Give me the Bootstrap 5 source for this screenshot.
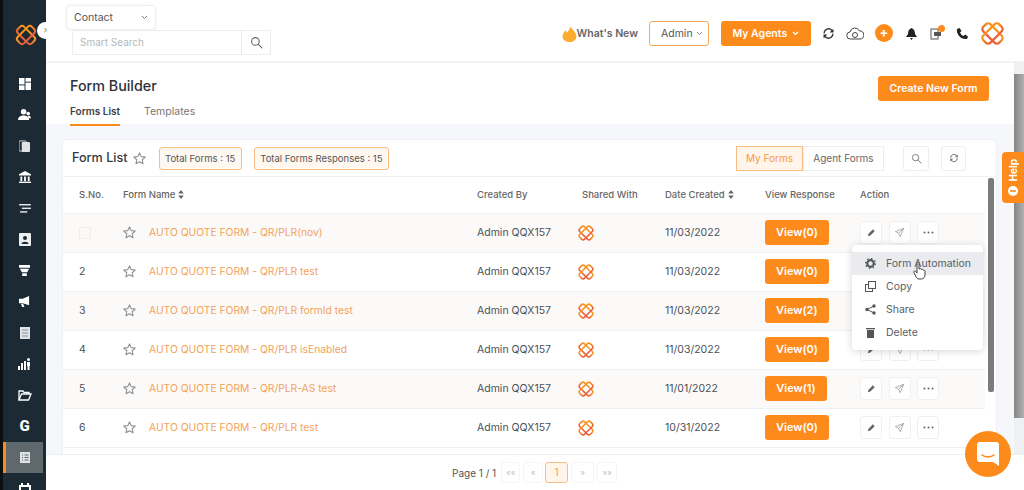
<!DOCTYPE html>
<html lang="en">
<head>
<meta charset="UTF-8">
<title>Form Builder</title>
<link href="https://cdn.jsdelivr.net/npm/bootstrap@5.3.3/dist/css/bootstrap.min.css" rel="stylesheet">
<style>
  html, body { height: 100%; overflow: hidden; }
  body { font-family: "Inter", "Open Sans", sans-serif; font-size: 11px; color: #4a5058; background: #fff; }
  .app-wrap { height: 490px; width: 1024px; }
  .side-bar { width: 46px; flex: none; background: #1c2b33; border-left: 3px solid #0a0f12; position: relative; padding-top: 23px; }
  .side-logo { height: 26px; margin-bottom: 19px; padding-left: 11px; }
  .side-toggle { position: absolute; left: 34px; top: 22px; width: 17px; height: 17px; border-radius: 50%; background: #fff; color: #777; font-size: 9px; line-height: 16px; text-align: center; z-index: 5; }
  .side-item { height: 31.2px; display: flex; align-items: center; justify-content: center; color: #fff; }
  .side-item.active { background: #5f686d; border-left: 3px solid #fd8b1c; margin-right: 3px; }
  .side-g { font-family: "Roboto", sans-serif; font-weight: 900; font-size: 15px; }
  .top-head { height: 63px; border-bottom: 2px solid #f2f3f5; padding: 5px 18px 0 20px; }
  .contact-sel { width: 90px; height: 25px; border: 1px solid #eee; border-radius: 4px; padding: 0 7px; color: #555; font-size: 10.5px; box-shadow: 0 0 3px rgba(0,0,0,.06); }
  .smart-box { margin-left: 6px; width: 199px; height: 25px; border: 1px solid #eee; }
  .smart-input { flex: 1; color: #b5b8bc; font-size: 10px; padding-left: 7px; line-height: 22px; border-right: 1px solid #e8e8e8; }
  .smart-btn { width: 28px; display: flex; align-items: center; justify-content: center; color: #666; }
  .whats-new { font-weight: 600; font-size: 10.5px; color: #666; margin-right: 11px; margin-top: 5px; }
  .admin-sel { width: 60px; height: 25px; border: 1px solid #f4a860; border-radius: 3px; color: #555; font-size: 10.5px; padding: 0 5px 0 11px; margin-right: 12px; }
  .btn-orange { background: #fd8b1c; color: #fff; border: 0; border-radius: 3px; font-weight: 600; font-size: 10.5px; padding: 0; }
  .agents-btn { width: 90px; height: 25px; margin-right: 11px; }
  .plus-dot { width: 18px; height: 18px; background: #fd8b1c; border-radius: 50%; color: #fff; text-align: center; font-weight: 700; font-size: 13px; line-height: 17px; margin-right: 13px; margin-top: 3px; }
  .note-dot { position: absolute; width: 7px; height: 7px; border-radius: 50%; background: #fd8b1c; right: -3px; top: -3px; }
  .note-wrap { margin-right: 14px; margin-top: 7px; height: 12px; }
  .page-title { height: 61px; padding: 14px 35px 0 24px; }
  .page-title h1 { font-size: 14.3px; font-weight: 500; color: #2c3238; margin: 0 0 9px; }
  .tab-link { display: inline-block; font-size: 10px; padding-bottom: 5px; color: #777; margin-right: 24px; }
  .tab-link.active { color: #3d4349; font-weight: 600; border-bottom: 2px solid #fd8b1c; }
  .tab-link.plain { font-size: 10.5px; }
  .create-btn { width: 111px; height: 25px; margin-top: -1px; }
  .page-body { background: #f5f7fa; padding: 15px 27px 0 16px; height: 330px; overflow: hidden; }
  .list-box { background: #fff; border: 1px solid #eff1f3; border-radius: 5px 5px 0 0; height: 330px; position: relative; }
  .list-head { height: 37px; padding: 0 30px 0 9px; border-bottom: 1px solid #f0f1f3; }
  .list-head h2 { font-size: 12.6px; font-weight: 500; color: #33393f; margin: 0 4px 0 0; }
  .count-tag { border: 1px solid #f7bd85; background: #fff8f1; border-radius: 3px; height: 23px; line-height: 21px; padding: 0 5.5px; font-size: 9.5px; color: #555; margin-left: 12px; white-space: nowrap; }
  .seg-btn { height: 25px; line-height: 23px; border: 1px solid #eee; font-size: 10px; color: #666; text-align: center; }
  .seg-btn.active { border-color: #f7bd85; background: #fff5ea; color: #f59a45; width: 67px; }
  .seg-btn.agent { width: 81px; }
  .tool-btn { width: 25px; height: 25px; border: 1px solid #eee; border-radius: 3px; display: flex; align-items: center; justify-content: center; color: #777; margin-left: 12px; }
  .tool-btn.wide { width: 26px; margin-left: 19px; }
  .form-grid { width: 922px; table-layout: fixed; margin: 0; }
  .form-grid th { height: 36px; font-weight: 500; font-size: 9.5px; color: #666; vertical-align: middle; padding: 0; border-bottom: 1px solid #eff0f2; background: #fff; }
  .form-grid td { height: 39px; vertical-align: middle; padding: 0; font-size: 10.5px; color: #4a5058; border-bottom: 1px solid #eff0f2; background: #fff; }
  .form-grid tr.tint td { background: #fcfaf8; }
  .form-link { color: #f2a25c; font-size: 10.3px; margin-left: 4px; }
  .star-cell { margin-left: -1px; }
  .check-mock { display: block; width: 12px; height: 12px; border: 1px solid #eee; background: #fbf9f7; }
  .sort-mark { margin-left: 3px; vertical-align: -1px; }
  .team-logo { margin-left: -5px; display: block; }
  .view-btn { height: 25px; padding: 0 11px; font-size: 11px; min-width: 62px; }
  .act-row { gap: 6.5px; }
  .act-btn { width: 22px; height: 23px; border: 1px solid #f0f0f0; background: #fff; border-radius: 3px; display: flex; align-items: center; justify-content: center; color: #666; }
  .v-thumb { position: absolute; right: 2px; top: 38px; width: 6px; height: 214px; background: #7b7b7b; border-radius: 2px; }
  .row-menu { position: absolute; left: 852px; top: 245px; width: 131px; height: 105px; background: #fff; border-radius: 4px; box-shadow: 0 1px 8px rgba(0,0,0,.16); padding-top: 7px; z-index: 6; }
  .menu-line { height: 23px; display: flex; align-items: center; font-size: 10.5px; color: #5a6066; padding-left: 13px; gap: 10px; }
  .menu-line.hover { background: #e9ebee; }
  .hand-cursor { position: absolute; left: 913px; top: 261px; z-index: 7; }
  .foot-bar { position: absolute; left: 46px; right: 0; top: 454px; height: 36px; background: #fff; border-top: 1px solid #eceef0; padding: 7px 0 0 406px; font-size: 10px; color: #555; }
  .pg-label { margin-right: 2px; margin-top: 4px; }
  .pg-cell { width: 20px; height: 21px; border: 1px solid #f5f5f5; border-radius: 3px; text-align: center; line-height: 19px; font-size: 8px; color: #c4c4c4; margin-left: 3px; }
  .pg-cell.edge { width: 19px; }
  .pg-cell.mid { width: 23px; }
  .pg-cell.active { width: 23px; border-color: #f7bd85; background: #fff5ea; color: #f59a45; font-size: 10px; margin-left: 2px; }
  .help-tab { position: absolute; left: 1002px; top: 152px; width: 22px; height: 51px; background: #fd8b1c; border-radius: 4px 0 0 4px; color: #fff; font-weight: 700; font-size: 10px; z-index: 8; }
  .help-tab span { writing-mode: vertical-rl; transform: rotate(180deg); }
  .right-track { position: absolute; left: 1014px; top: 62px; width: 10px; height: 392px; background: #eef0f2; z-index: 3; }
  .right-thumb { position: absolute; left: 0; top: 12px; width: 10px; height: 344px; background: linear-gradient(90deg,#858585,#b0b0b0); }
  .chat-ball { position: absolute; left: 965px; top: 431px; width: 46px; height: 46px; border-radius: 50%; background: #fd8b1c; display: flex; align-items: center; justify-content: center; z-index: 9; }
</style>
</head>
<body>
<svg width="0" height="0" class="position-absolute">
  <defs>
    <linearGradient id="logo-fade" gradientUnits="userSpaceOnUse" x1="0" y1="2" x2="0" y2="22">
      <stop offset="0.35" stop-color="#f7941d"/><stop offset="0.75" stop-color="#ea5b3c"/>
    </linearGradient>
    <symbol id="ic-logo" viewBox="0 0 24 24">
      <g fill="none" stroke="url(#logo-fade)" stroke-width="2">
        <rect x="2" y="7.500" width="20" height="9" rx="3" transform="rotate(45 12 12)"/>
        <rect x="2" y="7.500" width="20" height="9" rx="3" transform="rotate(-45 12 12)"/>
      </g>
    </symbol>
    <symbol id="ic-star" viewBox="0 0 24 24"><path d="M12 3l2.700 6 6.500.7-4.900 4.300 1.400 6.400L12 17.100l-5.700 3.300 1.400-6.400L2.800 9.700l6.500-.7z" fill="none" stroke="#8a8f94" stroke-width="1.700" stroke-linejoin="round"/></symbol>
    <symbol id="ic-search" viewBox="0 0 24 24"><circle cx="10" cy="10" r="7" fill="none" stroke="currentColor" stroke-width="2"/><path d="M15.500 15.500L22 22" stroke="currentColor" stroke-width="2" stroke-linecap="round"/></symbol>
    <symbol id="ic-sync" viewBox="0 0 24 24"><g fill="none" stroke="currentColor" stroke-width="2.400" stroke-linecap="round"><path d="M4 11a8 8 0 0 1 14-5l2 2"/><path d="M20 13a8 8 0 0 1-14 5l-2-2"/></g><path d="M21 3v7h-7zM3 21v-7h7z" fill="currentColor"/></symbol>
    <symbol id="ic-pen" viewBox="0 0 24 24"><path d="M4 20l1.500-5.500L15 5l4 4-9.500 9.500z" fill="currentColor"/></symbol>
    <symbol id="ic-send" viewBox="0 0 24 24"><path d="M21 3L3 10l7 3.500L13.500 21zM21 3L10 13.500" fill="none" stroke="#8b8f93" stroke-width="1.500" stroke-linejoin="round"/></symbol>
    <symbol id="ic-sort" viewBox="0 0 6 9"><path d="M3 0l2.800 3.500H.2zM3 9L.2 5.500h5.600z" fill="#666"/></symbol>
  </defs>
</svg>

<div class="app-wrap d-flex">
  <nav class="side-bar">
    <div class="side-logo"><svg width="24" height="24"><use href="#ic-logo"/></svg></div>
    <div class="side-toggle">&#8250;</div>
    <div class="side-item"><svg width="12" height="12" viewBox="0 0 13 13" fill="#fff"><rect width="6" height="7"/><rect x="7" width="6" height="4"/><rect y="8" width="6" height="5"/><rect x="7" y="5" width="6" height="8"/></svg></div>
    <div class="side-item"><svg width="13" height="11" viewBox="0 0 14 12" fill="#fff"><circle cx="6" cy="3" r="3"/><path d="M0 12c0-4 3-5 6-5s6 1 6 5z"/><circle cx="11" cy="5" r="2"/><path d="M14 10c0-2-1-3-3-3v3z"/></svg></div>
    <div class="side-item"><svg width="11" height="12" viewBox="0 0 12 13"><rect x="0" y="1" width="8" height="11" rx="1" fill="none" stroke="#dfe3e6"/><rect x="3" y="2" width="9" height="11" rx="1" fill="#dfe3e6"/></svg></div>
    <div class="side-item"><svg width="12" height="12" viewBox="0 0 13 13" fill="#fff"><path d="M6.500 0L13 3.500V5H0V3.500z"/><rect x="1.500" y="6" width="2" height="5"/><rect x="5.500" y="6" width="2" height="5"/><rect x="9.500" y="6" width="2" height="5"/><rect y="11.500" width="13" height="1.500"/></svg></div>
    <div class="side-item"><svg width="12" height="9" viewBox="0 0 13 10" fill="#e6e9eb"><rect width="13" height="1.600"/><rect x="3" y="4" width="10" height="1.600"/><rect x="1" y="8" width="8" height="1.600"/></svg></div>
    <div class="side-item"><svg width="12" height="13" viewBox="0 0 12 13"><rect width="12" height="13" rx="1" fill="#eceef0"/><circle cx="6" cy="5" r="2" fill="#1c2b33"/><path d="M2.500 11c0-3 7-3 7 0z" fill="#1c2b33"/></svg></div>
    <div class="side-item"><svg width="11" height="11" viewBox="0 0 12 12" fill="#fff"><rect width="12" height="3"/><path d="M1 4h10L9 8H3z"/><rect x="3.500" y="9" width="5" height="3"/></svg></div>
    <div class="side-item"><svg width="13" height="11" viewBox="0 0 14 12" fill="#fff"><path d="M12 0v10L5 8H1V3h4z"/><path d="M3 8.500h2.500L7 12H4.500z"/></svg></div>
    <div class="side-item"><svg width="10" height="12" viewBox="0 0 10 12"><rect width="10" height="12" fill="#dfe3e6"/><path d="M2 3h6M2 6h6M2 9h6" stroke="#8a939a"/></svg></div>
    <div class="side-item"><svg width="13" height="12" viewBox="0 0 13 12" fill="#fff"><rect y="8" width="2" height="4"/><rect x="3" y="5" width="2" height="7"/><rect x="6" y="3" width="2" height="9"/><circle cx="10.500" cy="1.500" r="1.500"/><path d="M9 4h3v4h-.5v4h-2V8H9z"/></svg></div>
    <div class="side-item"><svg width="14" height="11" viewBox="0 0 14 11" fill="none" stroke="#fff" stroke-width="1.300"><path d="M1 10V1h4l1 1.500h5V4"/><path d="M1 10l2.500-6H13l-2.500 6z"/></svg></div>
    <div class="side-item side-g">G</div>
    <div class="side-item active"><svg width="10" height="11" viewBox="0 0 10 11"><rect width="10" height="11" fill="#dfe3e6"/><path d="M2 3h1M4.500 3h4M2 5.500h1M4.500 5.500h4M2 8h1M4.500 8h4" stroke="#5f686d"/></svg></div>
    <div class="side-item"><svg width="12" height="13" viewBox="0 0 12 13" fill="none" stroke="#fff" stroke-width="2"><rect x="1" y="3" width="10" height="9"/><path d="M3 0v3M9 0v3"/></svg></div>
  </nav>

  <div class="flex-grow-1">
    <header class="top-head d-flex justify-content-between">
      <div>
        <div class="contact-sel d-flex align-items-center justify-content-between"><span>Contact</span><svg width="7" height="5" viewBox="0 0 7 5"><path d="M1 1l2.500 2.500L6 1" fill="none" stroke="#777"/></svg></div>
        <div class="smart-box d-flex">
          <div class="smart-input">Smart Search</div>
          <div class="smart-btn"><svg width="13" height="13"><use href="#ic-search"/></svg></div>
        </div>
      </div>
      <div class="d-flex align-items-start pt-3">
        <span class="whats-new d-flex align-items-center">
          <svg width="15" height="16" viewBox="0 0 13 15"><path d="M7 0c1 3 6 5 6 10a6.500 5 0 0 1-13 0c0-3 2-4 2.500-6 1 .5 1.500 1.500 1.500 2.500C5.500 5 7 3 7 0z" fill="#fbab2d"/></svg>What's New
        </span>
        <div class="admin-sel d-flex align-items-center justify-content-between"><span>Admin</span><svg width="7" height="5" viewBox="0 0 7 5"><path d="M1 1l2.500 2.500L6 1" fill="none" stroke="#888"/></svg></div>
        <button class="btn-orange agents-btn">My Agents &nbsp;<svg width="7" height="5" viewBox="0 0 7 5"><path d="M1 1l2.500 2.500L6 1" fill="none" stroke="#fff" stroke-width="1.200"/></svg></button>
        <svg width="13" height="13" style="color:#333;margin-right:11px;margin-top:6px"><use href="#ic-sync"/></svg>
        <svg width="18" height="15" viewBox="0 0 18 15" style="margin-right:11px;margin-top:5px"><path d="M4.500 13A3.500 3.500 0 0 1 4 6a5 5 0 0 1 9.500-1A4 4 0 0 1 14 13z" fill="none" stroke="#444" stroke-width="1"/><circle cx="9" cy="9" r="2.500" fill="none" stroke="#444"/></svg>
        <div class="plus-dot">+</div>
        <svg width="11" height="12" viewBox="0 0 11 12" style="margin-right:13px;margin-top:7px"><path d="M5.500 0C3 1 2 3 2 6L0 9h11L9 6c0-3-1-5-3.500-6zM4 10h3l-1.500 2z" fill="#222"/></svg>
        <div class="position-relative note-wrap"><svg width="12" height="12" viewBox="0 0 12 12" class="d-block"><rect x="1" y="1" width="7" height="10" fill="none" stroke="#555"/><rect x="4" y="4" width="7" height="4" fill="#555"/></svg><span class="note-dot"></span></div>
        <svg width="12" height="12" viewBox="0 0 12 12" style="margin-right:11px;margin-top:7px"><path d="M1 1l2.500-1 2 3-1.500 1.500c.5 1.500 2 3 3.500 3.500L9 6.500l3 2-1 2.500C5 12 0 6 1 1z" fill="#222"/></svg>
        <svg width="27" height="27" style="margin-top:-1px"><use href="#ic-logo"/></svg>
      </div>
    </header>

    <section class="page-title d-flex justify-content-between">
      <div>
        <h1>Form Builder</h1>
        <span class="tab-link active">Forms List</span><span class="tab-link plain">Templates</span>
      </div>
      <button class="btn-orange create-btn">Create New Form</button>
    </section>

    <main class="page-body">
      <div class="list-box">
        <div class="list-head d-flex align-items-center">
          <h2>Form List</h2>
          <svg width="15" height="15"><use href="#ic-star"/></svg>
          <span class="count-tag">Total Forms : 15</span>
          <span class="count-tag">Total Forms Responses : 15</span>
          <div class="ms-auto d-flex">
            <span class="seg-btn active">My Forms</span>
            <span class="seg-btn agent">Agent Forms</span>
            <span class="tool-btn wide"><svg width="11" height="11"><use href="#ic-search"/></svg></span>
            <span class="tool-btn"><svg width="10" height="10"><use href="#ic-sync"/></svg></span>
          </div>
        </div>
        <table class="form-grid">
          <colgroup><col style="width:60px"><col style="width:354px"><col style="width:105px"><col style="width:83px"><col style="width:100px"><col style="width:95px"><col></colgroup>
          <thead>
            <tr>
              <th class="ps-3">S.No.</th>
              <th>Form Name<svg class="sort-mark" width="6" height="9"><use href="#ic-sort"/></svg></th>
              <th>Created By</th>
              <th>Shared With</th>
              <th>Date Created<svg class="sort-mark" width="6" height="9"><use href="#ic-sort"/></svg></th>
              <th>View Response</th>
              <th>Action</th>
            </tr>
          </thead>
          <tbody id="formRows"></tbody>
        </table>
        <div class="v-thumb"></div>
      </div>
    </main>
  </div>
</div>

<div class="foot-bar d-flex align-items-start">
  <span class="pg-label">Page 1 / 1</span>
  <span class="pg-cell edge">&#171;&#171;</span><span class="pg-cell">&#171;</span><span class="pg-cell active">1</span><span class="pg-cell mid">&#187;</span><span class="pg-cell">&#187;&#187;</span>
</div>

<div class="right-track"><div class="right-thumb"></div></div>
<div class="help-tab d-flex flex-column align-items-center justify-content-center"><span>Help</span><svg width="10" height="10" viewBox="0 0 10 10" class="mt-1"><circle cx="5" cy="5" r="5" fill="#fff"/><rect x="2" y="4.200" width="6" height="1.600" fill="#fd8b1c"/></svg></div>

<div class="row-menu">
  <div class="menu-line hover"><svg width="11" height="11" viewBox="0 0 11 11"><circle cx="5.500" cy="5.500" r="3.300" fill="none" stroke="#555" stroke-width="2.200"/><circle cx="5.500" cy="5.500" r="5" fill="none" stroke="#555" stroke-width="1.200" stroke-dasharray="1.500 2.400"/></svg>Form Automation</div>
  <div class="menu-line"><svg width="11" height="11" viewBox="0 0 11 11" fill="none" stroke="#555"><rect x=".5" y="3.500" width="7" height="7"/><rect x="3.500" y=".5" width="7" height="7" fill="#fff"/></svg>Copy</div>
  <div class="menu-line"><svg width="11" height="11" viewBox="0 0 11 11"><path d="M9 2L2 5.500 9 9" fill="none" stroke="#555"/><circle cx="9" cy="2" r="1.700" fill="#555"/><circle cx="2" cy="5.500" r="1.700" fill="#555"/><circle cx="9" cy="9" r="1.700" fill="#555"/></svg>Share</div>
  <div class="menu-line"><svg width="11" height="11" viewBox="0 0 11 11" fill="#555"><rect x="2" y="3" width="7" height="8"/><rect x="1" y="1" width="9" height="1.300"/></svg>Delete</div>
</div>

<svg class="hand-cursor" width="14" height="19" viewBox="0 0 14 19"><path d="M4 1.500c1-.8 2 0 2 1V8l1-.3c1-.3 1.500.3 1.500.8 1-.4 1.800 0 1.800.7 1-.3 1.700.3 1.700 1V14c0 2-1.500 4-3.500 4H6c-1.500 0-2.500-1-3-2L1 11.500c-.5-1.500 1-2 2-1l1 1.500z" fill="#fff" stroke="#444" stroke-width="1"/></svg>

<div class="chat-ball"><svg width="24" height="26" viewBox="0 0 24 26"><path d="M4 1h16a3 3 0 0 1 3 3v21l-6-4H4a3 3 0 0 1-3-3V4a3 3 0 0 1 3-3z" fill="#fff"/><path d="M6 14c3 2.500 9 2.500 12 0" fill="none" stroke="#fd8b1c" stroke-width="1.600" stroke-linecap="round"/></svg></div>

<script>
  const forms = [
    ["", "AUTO QUOTE FORM - QR/PLR(nov)", "11/03/2022", "View(0)"],
    ["2", "AUTO QUOTE FORM - QR/PLR test", "11/03/2022", "View(0)"],
    ["3", "AUTO QUOTE FORM - QR/PLR formId test", "11/03/2022", "View(2)"],
    ["4", "AUTO QUOTE FORM - QR/PLR isEnabled", "11/03/2022", "View(0)"],
    ["5", "AUTO QUOTE FORM - QR/PLR-AS test", "11/01/2022", "View(1)"],
    ["6", "AUTO QUOTE FORM - QR/PLR test", "10/31/2022", "View(0)"],
    ["7", "", "", ""]
  ];
  const tbody = document.getElementById("formRows");
  forms.forEach((f, i) => {
    if (!f[1]) { tbody.insertAdjacentHTML("beforeend", "<tr><td colspan='7'></td></tr>"); return; }
    const first = f[0] ? f[0] : "<span class='check-mock'></span>";
    tbody.insertAdjacentHTML("beforeend", `
      <tr class="${i % 2 === 0 ? "tint" : ""}">
        <td class="ps-3">${first}</td>
        <td><div class="d-flex align-items-center gap-2"><svg class="star-cell" width="15" height="15"><use href="#ic-star"/></svg><span class="form-link">${f[1]}</span></div></td>
        <td>Admin QQX157</td>
        <td><svg width="18" height="18" class="team-logo"><use href="#ic-logo"/></svg></td>
        <td>${f[2]}</td>
        <td><button class="btn-orange view-btn">${f[3]}</button></td>
        <td><div class="d-flex act-row">
          <span class="act-btn"><svg width="11" height="11"><use href="#ic-pen"/></svg></span>
          <span class="act-btn"><svg width="11" height="11"><use href="#ic-send"/></svg></span>
          <span class="act-btn"><svg width="11" height="3" viewBox="0 0 11 3" fill="#666"><circle cx="1.500" cy="1.500" r="1"/><circle cx="5.500" cy="1.500" r="1"/><circle cx="9.500" cy="1.500" r="1"/></svg></span>
        </div></td>
      </tr>`);
  });
</script>
<script src="https://cdn.jsdelivr.net/npm/bootstrap@5.3.3/dist/js/bootstrap.bundle.min.js"></script>
</body>
</html>
